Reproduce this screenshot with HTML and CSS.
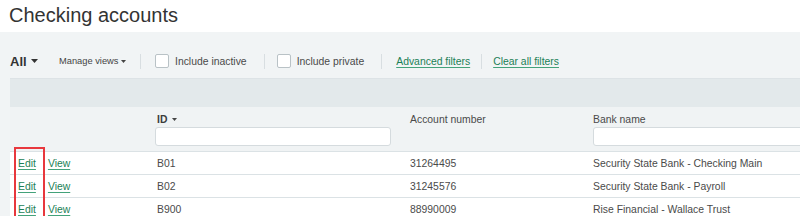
FILE: index.html
```html
<!DOCTYPE html>
<html>
<head>
<meta charset="utf-8">
<link rel="stylesheet" href="styles.css">
</head>
<body>
<div class="title">Checking accounts</div>
<div class="page">
  <div class="toolbar">
    <span class="all">All <svg class="caret" width="7" height="4" viewBox="0 0 7 4"><path d="M0 0H7L3.5 4Z" fill="#333"/></svg></span>
    <span class="manage">Manage views <svg class="caret-s" width="5" height="3" viewBox="0 0 5 3"><path d="M0 0H5L2.5 3Z" fill="#444"/></svg></span>
    <span class="sep sep1"></span>
    <span class="check"><span class="box"></span>Include inactive</span>
    <span class="sep sep2"></span>
    <span class="check"><span class="box"></span>Include private</span>
    <span class="sep sep3"></span>
    <a class="link adv">Advanced filters</a>
    <span class="sep sep4"></span>
    <a class="link">Clear all filters</a>
  </div>
  <div class="grid">
    <div class="band"></div>
    <div class="head">
      <div class="hc c1"></div>
      <div class="hc c2"><div class="label">ID <svg class="caret-s" width="5" height="3" viewBox="0 0 5 3"><path d="M0 0H5L2.5 3Z" fill="#444"/></svg></div><div class="input in2"></div></div>
      <div class="hc c3"><div class="label">Account number</div></div>
      <div class="hc c4"><div class="label lb4">Bank name</div><div class="input in4"></div></div>
    </div>
    <div class="row">
      <div class="c1 acts"><a class="link">Edit</a><a class="link">View</a></div>
      <div class="c2 txt">B01</div>
      <div class="c3 txt">31264495</div>
      <div class="c4 txt4">Security State Bank - Checking Main</div>
    </div>
    <div class="row">
      <div class="c1 acts"><a class="link">Edit</a><a class="link">View</a></div>
      <div class="c2 txt">B02</div>
      <div class="c3 txt">31245576</div>
      <div class="c4 txt4">Security State Bank - Payroll</div>
    </div>
    <div class="row">
      <div class="c1 acts"><a class="link">Edit</a><a class="link">View</a></div>
      <div class="c2 txt">B900</div>
      <div class="c3 txt">88990009</div>
      <div class="c4 txt4">Rise Financial - Wallace Trust</div>
    </div>
    <div class="highlight"></div>
  </div>
</div>
</body>
</html>
```

FILE: styles.css
```css
html, body {
  margin: 0;
  padding: 0;
  background: #f1f4f5;
  font-family: "Liberation Sans", Arial, sans-serif;
  color: #4a4a4a;
  overflow: hidden;
}
.title {
  background: #ffffff;
  height: 32px;
  line-height: 30px;
  padding-left: 9px;
  font-size: 20px;
  color: #333333;
}
.page {
  padding-left: 10px;
}
.toolbar {
  height: 47px;
  display: flex;
  align-items: center;
  border-bottom: 1px solid #dde3e6;
  font-size: 10.4px;
  color: #4a4a4a;
  padding-top: 12px;
  box-sizing: border-box;
}
.all {
  font-size: 13px;
  font-weight: bold;
  color: #333;
  display: flex;
  align-items: center;
  gap: 4px;
  width: 49px;
}
.manage {
  font-size: 9.3px;
  color: #444;
  display: flex;
  align-items: center;
  gap: 3px;
  width: 81px;
}
.sep {
  width: 1px;
  height: 15px;
  background: #d8dee1;
}
.sep1 { margin-right: 14px; }
.sep2 { margin-left: 17px; margin-right: 12px; }
.sep3 { margin-left: 17px; margin-right: 14px; }
.sep4 { margin-left: 11px; margin-right: 11px; }
.check {
  display: flex;
  align-items: center;
  font-size: 10.4px;
}
.box {
  width: 12px;
  height: 12px;
  border: 1px solid #b9c2c6;
  border-radius: 2px;
  background: #fff;
  margin-right: 6px;
}
.link {
  color: #1b7f56;
  text-decoration: underline;
  text-decoration-color: #43a27a;
  text-underline-offset: 2px;
  font-size: 10.4px;
}
.grid {
  position: relative;
}
.band {
  height: 28px;
  background: #e3e9eb;
}
.head {
  display: grid;
  grid-template-columns: 145px 253px 185px 1fr;
  height: 44px;
  border-bottom: 1px solid #dbe2e5;
  background: #f0f3f4;
}
.hc {
  padding-top: 5px;
  box-sizing: border-box;
}
.label {
  font-size: 10.4px;
  height: 15px;
  line-height: 12px;
  padding-left: 2px;
  color: #4a4a4a;
  display: flex;
  align-items: center;
  gap: 5px;
}
.c2 .label { font-weight: bold; color: #3c3c3c; }
.lb4 { padding-left: 0; }
.input {
  height: 19px;
  box-sizing: border-box;
  border: 1px solid #d5dbde;
  border-radius: 3px;
  background: #fff;
}
.in2 { width: 236px; }
.in4 { width: 220px; }
.row {
  display: grid;
  grid-template-columns: 145px 253px 185px 1fr;
  height: 22px;
  align-items: center;
  background: #fff;
  border-bottom: 1px solid #dbe2e5;
  font-size: 10.4px;
}
.acts {
  display: flex;
  gap: 12px;
  padding-left: 8px;
}
.txt { padding-left: 2px; }
.txt4 { padding-left: 0; }
.highlight {
  position: absolute;
  left: 4px;
  top: 68px;
  width: 27px;
  height: 80px;
  border: 2px solid #e8383d;
}
```
